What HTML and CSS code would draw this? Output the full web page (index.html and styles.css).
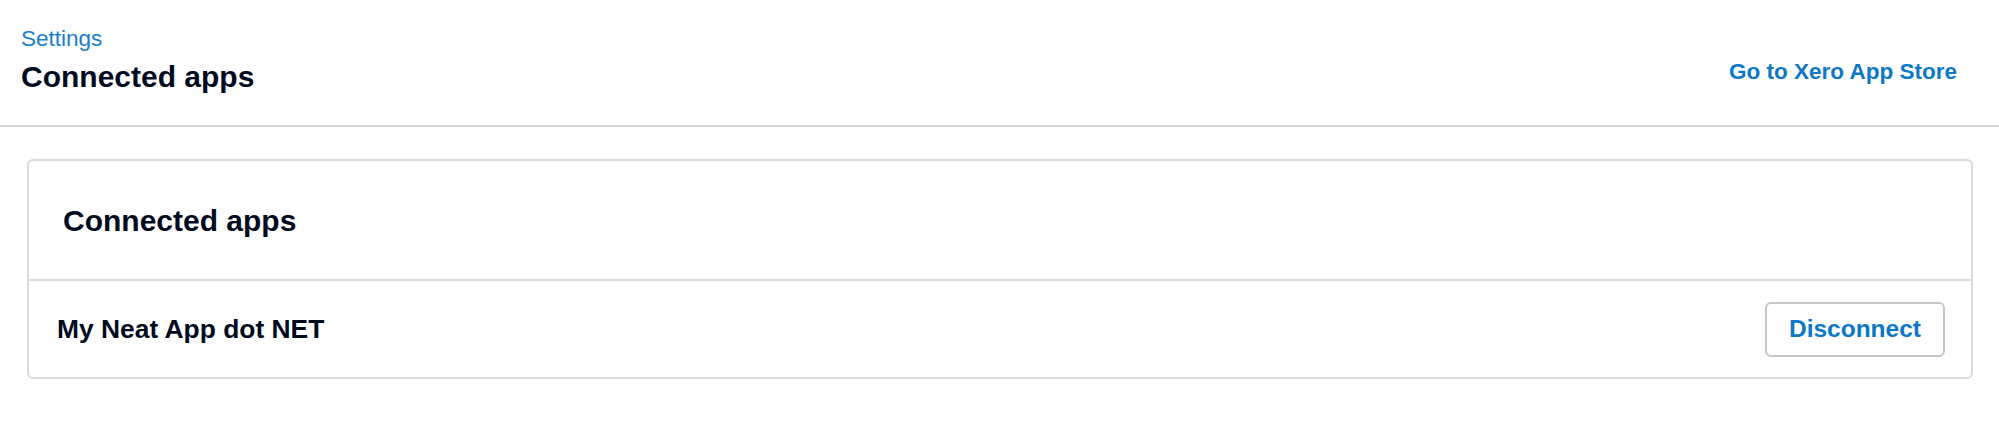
FILE: index.html
```html
<!DOCTYPE html>
<html lang="en">
<head>
<meta charset="utf-8">
<title>Connected apps</title>
<link rel="stylesheet" href="styles.css">
</head>
<body>
  <header class="page-header">
    <div class="title-block">
      <a class="breadcrumb" href="#">Settings</a>
      <h1 class="page-title">Connected apps</h1>
    </div>
    <a class="store-link" href="#">Go to Xero App Store</a>
  </header>
  <section class="card">
    <div class="card-header">
      <h2 class="card-title">Connected apps</h2>
    </div>
    <div class="app-row">
      <span class="app-name">My Neat App dot NET</span>
      <button class="btn" type="button">Disconnect</button>
    </div>
  </section>
</body>
</html>
```

FILE: styles.css
```css
* { box-sizing: border-box; }

html, body {
  margin: 0;
  padding: 0;
  background: #ffffff;
  font-family: "Liberation Sans", Arial, Helvetica, sans-serif;
  color: #000a1e;
}

a { text-decoration: none; }

.page-header {
  display: flex;
  justify-content: space-between;
  align-items: flex-start;
  height: 127px;
  padding: 24px 42px 0 21px;
  border-bottom: 2px solid #d5d7db;
}

.title-block {
  display: flex;
  flex-direction: column;
  align-items: flex-start;
}

.breadcrumb {
  font-size: 22.5px;
  line-height: 29px;
  color: #1a7ecd;
}

.page-title {
  margin: 6px 0 0;
  font-size: 30px;
  line-height: 36px;
  font-weight: 700;
  color: #000a1e;
}

.store-link {
  margin-top: 33px;
  font-size: 22.5px;
  line-height: 29px;
  font-weight: 700;
  color: #0b78c8;
}

.card {
  margin: 32px 26px 0 27px;
  border: 2px solid #d9dbdf;
  border-radius: 6px;
}

.card-header {
  padding: 42px 34px 40px;
  border-bottom: 2px solid #d9dbdf;
}

.card-title {
  margin: 0;
  font-size: 30px;
  line-height: 36px;
  font-weight: 700;
  color: #000a1e;
}

.app-row {
  display: flex;
  justify-content: space-between;
  align-items: center;
  min-height: 96px;
  padding: 0 26px 0 28px;
}

.app-name {
  font-size: 26.4px;
  line-height: 32px;
  font-weight: 700;
  color: #000a1e;
}

.btn {
  height: 55px;
  padding: 0 22px;
  background: #ffffff;
  border: 2px solid #c3c6cb;
  border-radius: 6px;
  font-family: "Liberation Sans", Arial, Helvetica, sans-serif;
  font-size: 24.5px;
  font-weight: 700;
  color: #0b78c8;
  cursor: pointer;
}
```
